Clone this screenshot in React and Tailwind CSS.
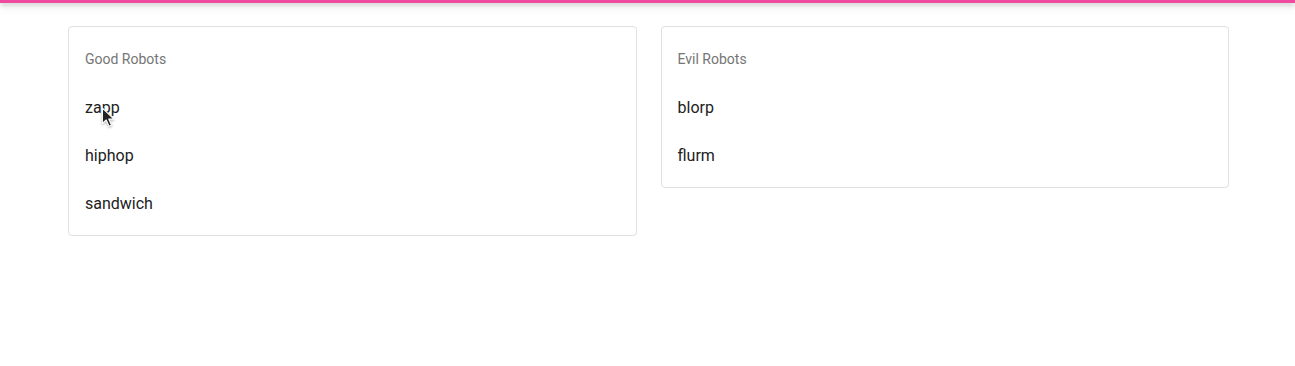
import React from 'react';

const lists = [
  { title: 'Good Robots', items: ['zapp', 'hiphop', 'sandwich'] },
  { title: 'Evil Robots', items: ['blorp', 'flurm'] },
];

function RobotList({ title, items }) {
  return (
    <div className="flex-1 border border-[#e0e0e0] rounded-[4px] py-2 bg-white">
      <div className="h-12 px-4 flex items-center text-[14px] text-[#757575]">{title}</div>
      {items.map((item) => (
        <div key={item} className="h-12 px-4 pt-[2px] flex items-center text-[16px] text-[#212121]">
          {item}
        </div>
      ))}
    </div>
  );
}

export default function App() {
  return (
    <div className="relative min-h-[366px] bg-white" style={{ fontFamily: 'Roboto, "Liberation Sans", sans-serif' }}>
      {/* top bar */}
      <div className="relative z-10 h-[3px] bg-[#f04a9e] shadow-[0_2px_4px_rgba(0,0,0,0.2),0_4px_10px_rgba(0,0,0,0.12)]" />

      <div className="flex items-start gap-6 pl-[68px] pr-[66px] pt-[23px]">
        {lists.map((l) => (
          <RobotList key={l.title} title={l.title} items={l.items} />
        ))}
      </div>

      {/* mouse pointer */}
      <svg className="absolute left-[101px] top-[107px] drop-shadow-[0_1px_1px_rgba(0,0,0,0.3)]" width="16" height="22" viewBox="0 0 14 20">
        <path d="M1 1 L1 15 L4.5 11.8 L7 17.5 L9.3 16.5 L6.8 11 L11.5 11 Z" fill="#222" stroke="#fff" strokeWidth="1" strokeLinejoin="round" />
      </svg>
    </div>
  );
}
